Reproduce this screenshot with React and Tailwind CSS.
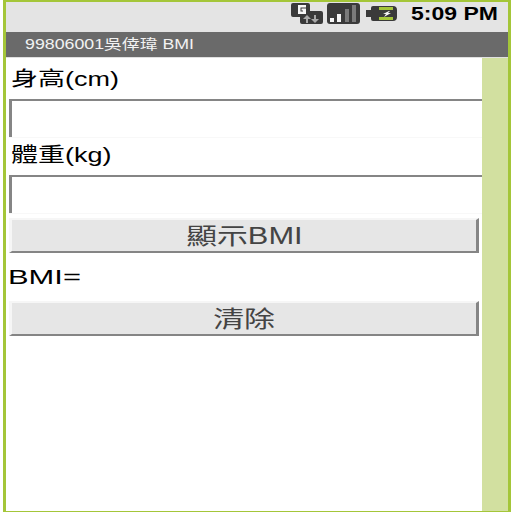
const cjk = { fontFamily: '"Liberation Sans", "Noto Sans CJK TC", sans-serif' }

function GsmIcon() {
  return (
    <svg width="32" height="21" viewBox="0 0 32 21">
      <path d="M0 2a2 2 0 0 1 2-2h15a2 2 0 0 1 2 2v6h11a2 2 0 0 1 2 2v9a2 2 0 0 1-2 2H11a2 2 0 0 1-2-2v-5H2a2 2 0 0 1-2-2z" fill="#3a3a3a" />
      <path d="M7 2h8v2.500H9.500v4H12V7.500h-1.500V5.500H15V11H7z" fill="#f6f6f6" />
      <path d="M15 20v-4h-3l4-4 4 4h-3v4zM25 12v4h3l-4 4-4-4h3v-4z" fill="#a8a8a8" />
    </svg>
  )
}

function SignalIcon() {
  return (
    <svg width="33" height="21" viewBox="0 0 33 21">
      <rect width="33" height="21" rx="3" fill="#3a3a3a" />
      <rect x="3" y="15" width="4" height="4" fill="#f6f6f6" />
      <rect x="10" y="11" width="4" height="8" fill="#f6f6f6" />
      <rect x="18" y="6" width="4" height="13" fill="#7a7a7a" />
      <rect x="25" y="2" width="4" height="17" fill="#7a7a7a" />
    </svg>
  )
}

function BatteryIcon() {
  return (
    <svg width="31" height="15" viewBox="0 0 31 15">
      <path d="M5 2a2 2 0 0 1 2-2h20a4 4 0 0 1 4 4v7a4 4 0 0 1-4 4H7a2 2 0 0 1-2-2v-2H0V4h5z" fill="#3a3a3a" />
      <rect x="13" y="1" width="14" height="3" fill="#a4c639" />
      <rect x="13" y="11" width="14" height="3" fill="#a4c639" />
      <path d="M23 5l-6 3h3l-2 3 7-4h-3l2-2z" fill="#f6f6f6" />
    </svg>
  )
}

function Field({ label, className }) {
  return (
    <>
      <div className={`pl-[5px] text-[20px] leading-[26px] text-black ${className}`}>
        <span className="inline-block origin-left scale-x-[1.35]">{label}</span>
      </div>
      <div className="ml-[3px] h-[38px] border-t-2 border-l-[3px] border-[#858585] bg-white" />
      <div className="ml-[3px] h-px bg-[#f8f8f8]" />
    </>
  )
}

function ActionButton({ children }) {
  return (
    <div className="mr-[3px] ml-[3px] flex h-[35px] items-center justify-center border-t-2 border-r-[3px] border-b-2 border-l-[3px] border-t-[#f6f6f6] border-r-[#858585] border-b-[#858585] border-l-[#f6f6f6] bg-[#e6e6e6] pt-[2px] text-[23px] leading-none text-[#444]">
      <span className="inline-block scale-x-[1.34]">{children}</span>
    </div>
  )
}

export default function App() {
  return (
    <div className="h-[512px] w-[512px] overflow-hidden bg-white pr-px pl-[3px]" style={cjk}>
      <div className="flex h-full flex-col border-t-2 border-r-[3px] border-b border-l-[3px] border-[#a4c639]">
        <div className="flex h-[30px] shrink-0 items-start bg-[#e4e4e4] pt-px pr-[10px]">
          <div className="ml-auto"><GsmIcon /></div>
          <div className="ml-[4px]"><SignalIcon /></div>
          <div className="mt-[3px] ml-[6px]"><BatteryIcon /></div>
          <span className="ml-[14px] w-[87px] text-[19px] leading-[22px] font-bold text-black">
            <span className="inline-block origin-left scale-x-[1.21]">5:09 PM</span>
          </span>
        </div>
        <div className="flex h-[25px] shrink-0 items-center bg-[#6a6a6a] pb-px pl-[19px] text-[14px] text-[#f2f2f2]">
          <span className="inline-block origin-left scale-x-[1.27]">99806001吳倖瑋 BMI</span>
        </div>
        <div className="h-px shrink-0 bg-[#e0e0e0]" />
        <div className="flex min-h-0 flex-1">
          <div className="flex-1">
            <Field label="身高(cm)" className="h-[41px] pt-[8px]" />
            <Field label="體重(kg)" className="h-[37px] pt-[4px]" />
            <div className="mt-[4px]"><ActionButton>顯示BMI</ActionButton></div>
            <div className="h-[48px] pt-[11px] pl-[2px] text-[21px] leading-[26px] text-black">
              <span className="inline-block origin-left scale-x-[1.47]">BMI=</span>
            </div>
            <ActionButton>清除</ActionButton>
          </div>
          <div className="w-[26px] shrink-0 bg-[#d2e0a0]" />
        </div>
      </div>
    </div>
  )
}
